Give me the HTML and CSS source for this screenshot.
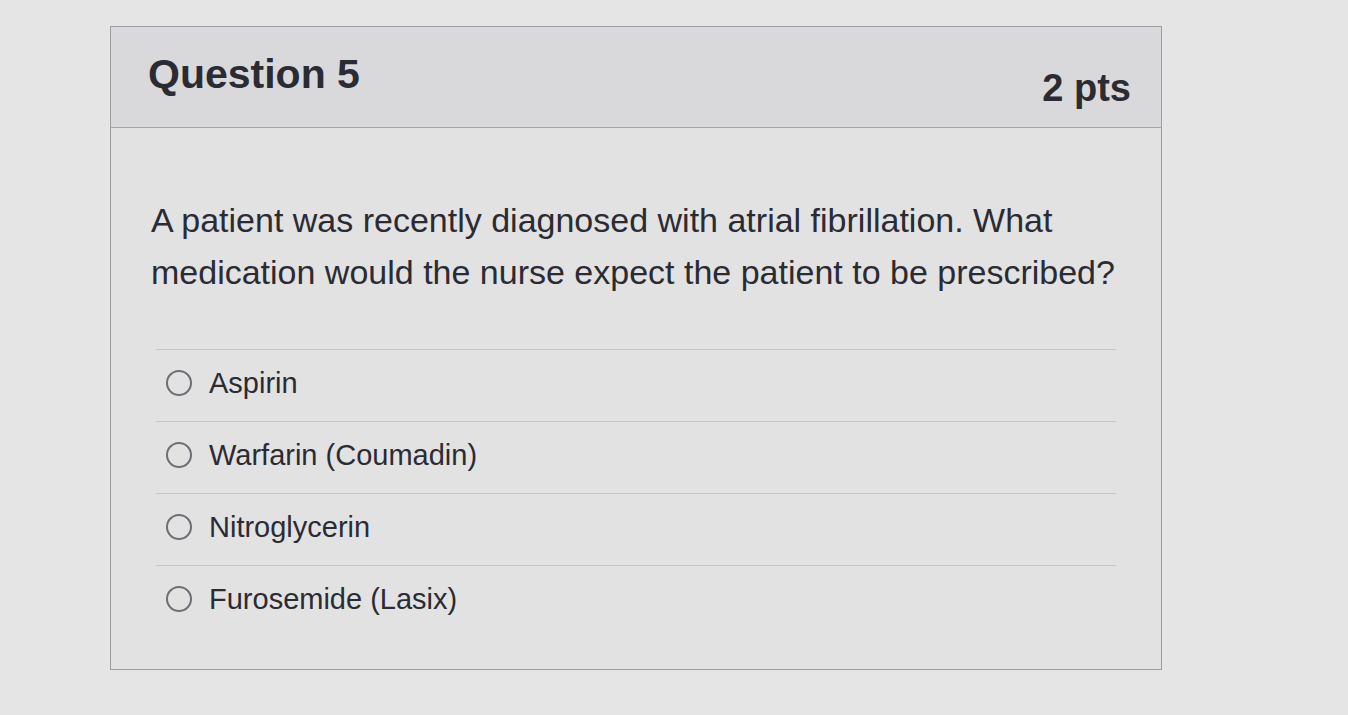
FILE: index.html
```html
<!DOCTYPE html>
<html>
<head>
    <title>Question 5</title>
    <link rel="stylesheet" href="styles.css">
</head>
<body>

<div class="question">
    <div class="question-header">
        <h2 class="question-title">Question 5</h2>
        <span class="question-points">2 pts</span>
    </div>
    <div class="question-body">
        <p class="question-text">A patient was recently diagnosed with atrial fibrillation. What medication would the nurse expect the patient to be prescribed?</p>
        <div class="answers">
            <label class="answer"><span class="radio"></span>Aspirin</label>
            <label class="answer"><span class="radio"></span>Warfarin (Coumadin)</label>
            <label class="answer"><span class="radio"></span>Nitroglycerin</label>
            <label class="answer"><span class="radio"></span>Furosemide (Lasix)</label>
        </div>
    </div>
</div>

</body>
</html>
```

FILE: styles.css
```css
body {
    margin: 0;
    background: #e5e5e6;
    font-family: 'Liberation Sans', Arial, sans-serif;
    color: #2b2b33;
}
.question {
    margin: 26px 0 0 110px;
    width: 1050px;
    border: 1.5px solid #9c9ca2;
    background: #e2e2e3;
}
.question-header {
    height: 100px;
    display: flex;
    justify-content: space-between;
    align-items: center;
    padding: 0 30px 0 37px;
    background: #d9d9db;
    border-bottom: 1.5px solid #a2a2a8;
}
.question-title {
    margin: 0;
    font-size: 41px;
    font-weight: bold;
    margin-bottom: 6px;
}
.question-points {
    font-size: 38px;
    font-weight: bold;
    margin-top: 22px;
}
.question-body {
    padding: 66px 45px 32px 45px;
}
.question-text {
    margin: 0 0 0 -5px;
    font-size: 34px;
    line-height: 52px;
    width: 1000px;
}
.answers {
    margin-top: 51px;
}
.answer {
    display: flex;
    align-items: center;
    height: 72px;
    box-sizing: border-box;
    padding-bottom: 5px;
    border-top: 1px solid #c6c6ca;
    font-size: 29px;
    padding-left: 10px;
}
.radio {
    width: 22px;
    height: 22px;
    border: 2px solid #6e6e74;
    border-radius: 50%;
    margin-right: 17px;
    flex: none;
}
```
